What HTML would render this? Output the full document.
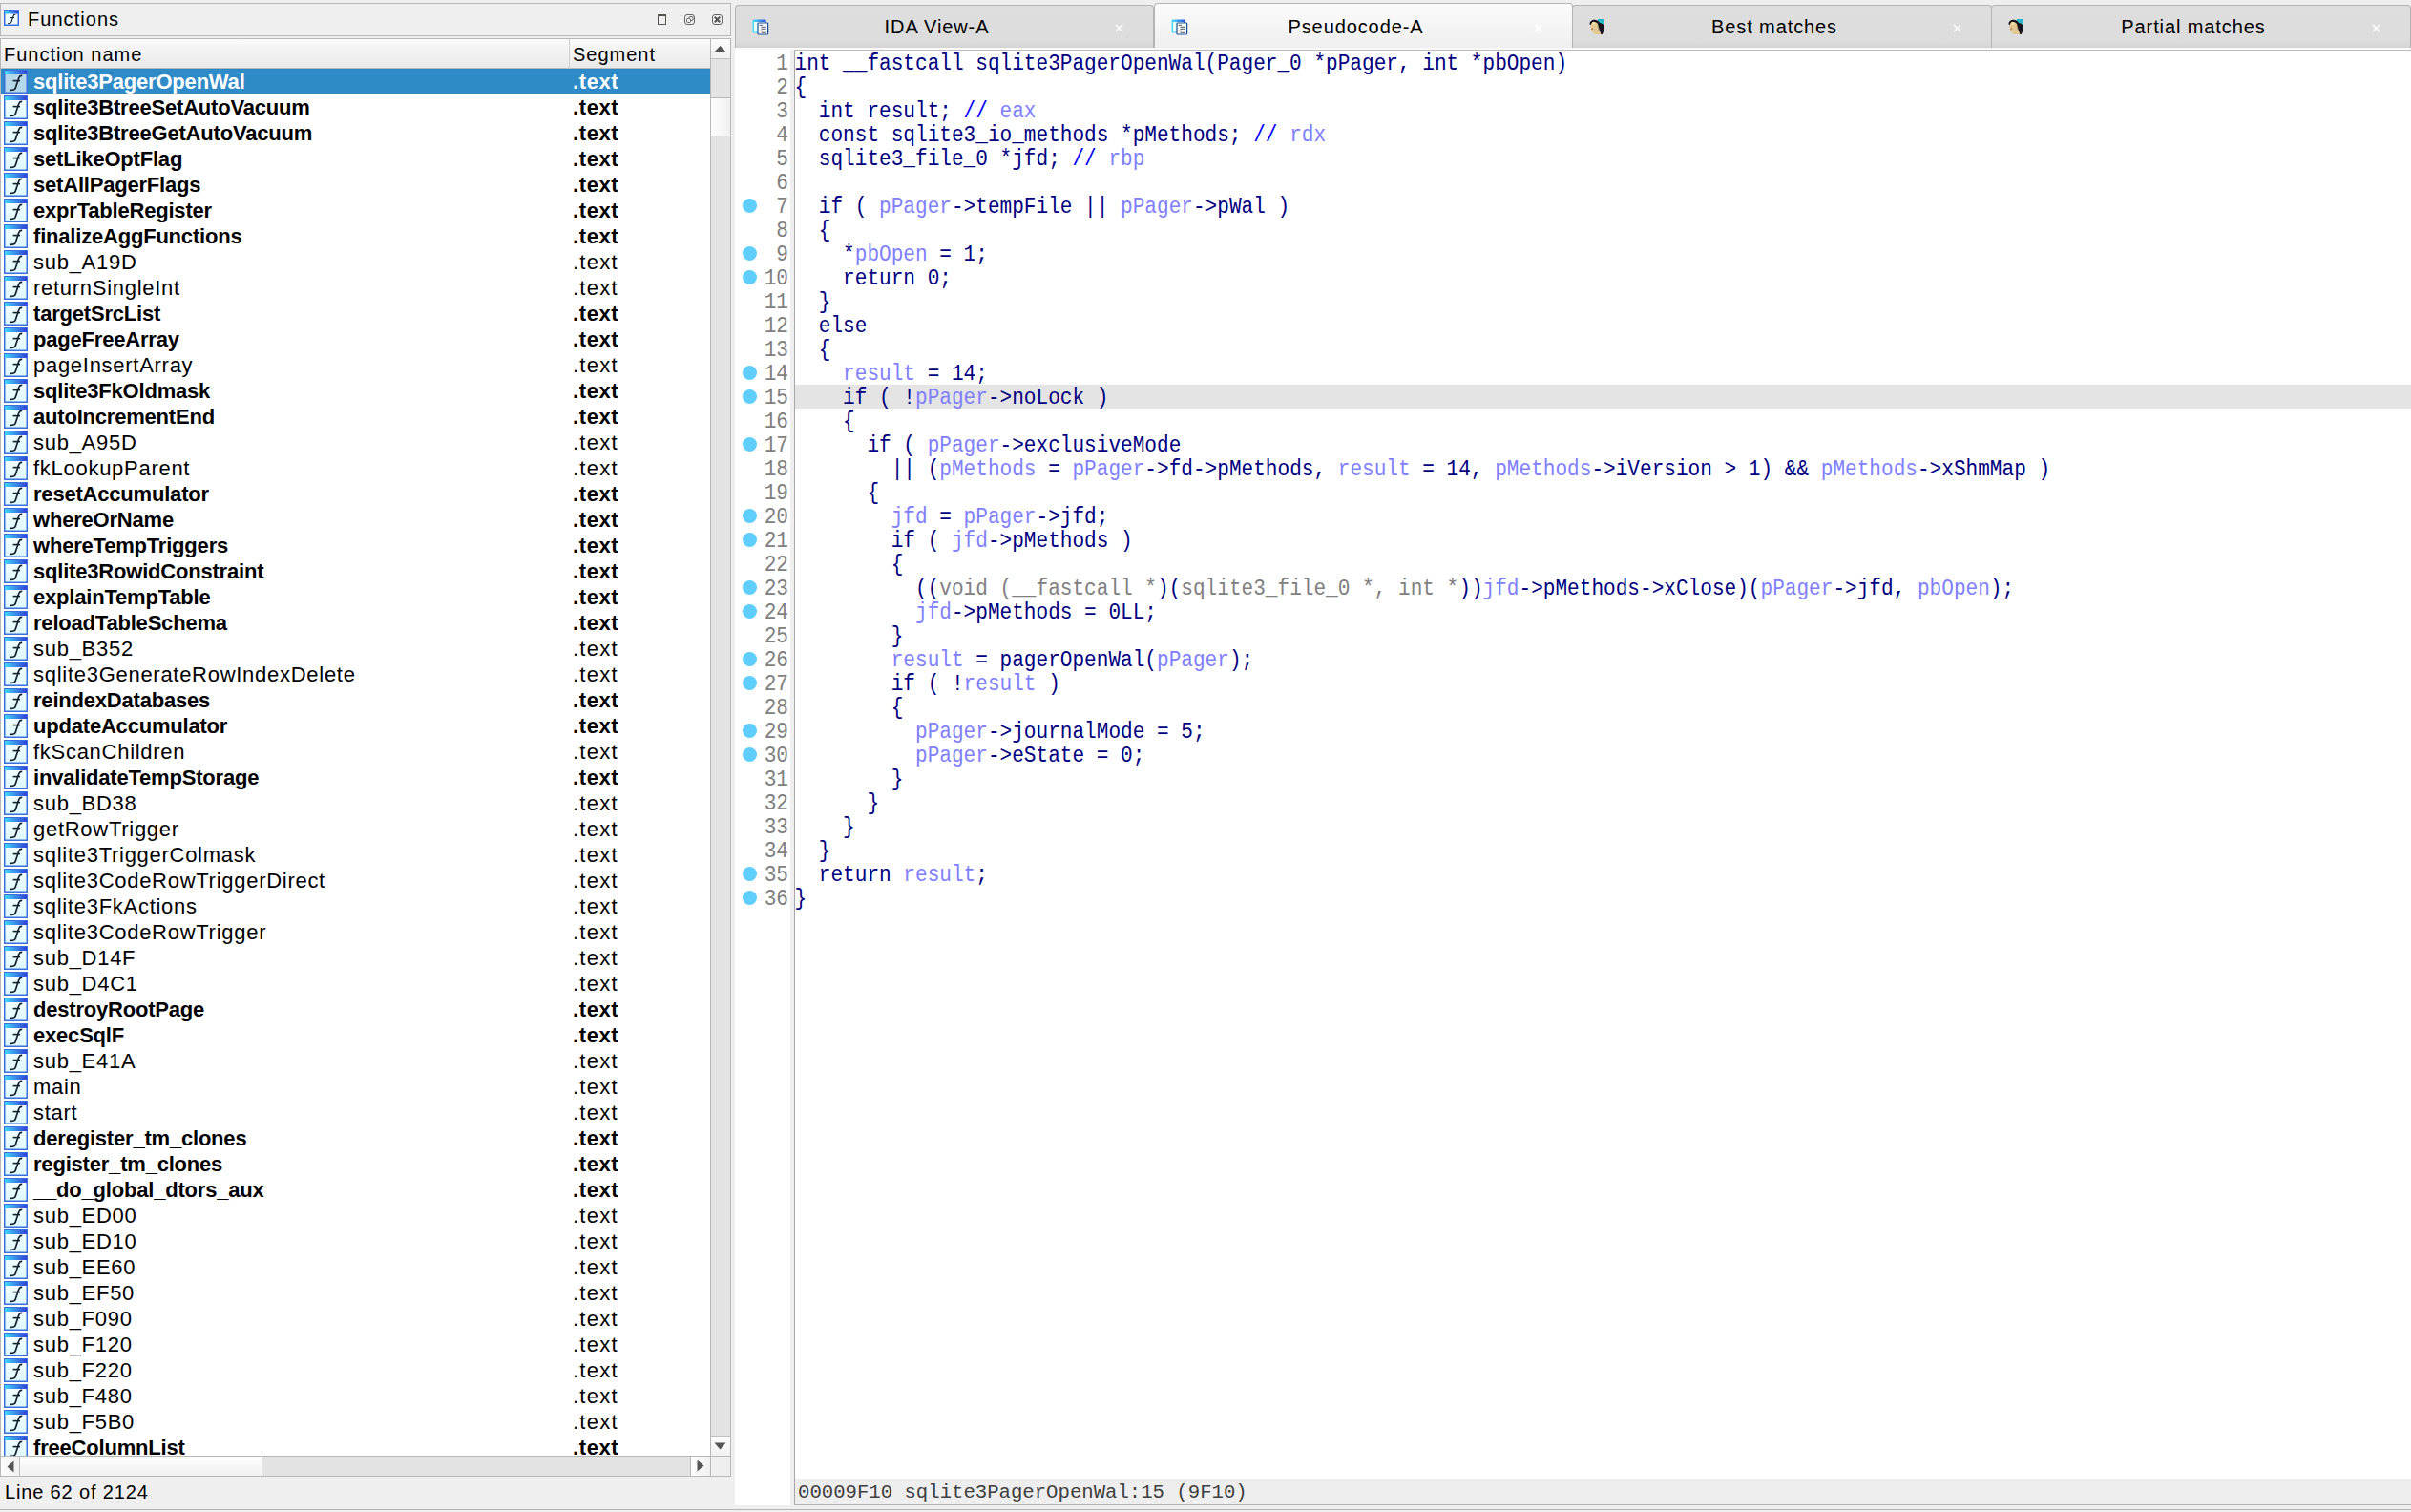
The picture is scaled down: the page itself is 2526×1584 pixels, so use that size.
<!DOCTYPE html><html><head><meta charset="utf-8"><style>
*{margin:0;padding:0;box-sizing:border-box}
html,body{width:2526px;height:1584px;overflow:hidden;background:#efefef;font-family:"Liberation Sans",sans-serif;color:#000}
.abs{position:absolute}
#ttl{left:0;top:3px;width:766px;height:35px;border:1px solid #b8b8b8;background:#efefef}
#ttl .t{position:absolute;left:28px;top:-1px;line-height:35px;font-size:20px;letter-spacing:1.05px}
#tbl{left:0;top:40px;width:766px;height:1507px;border:1px solid #b8b8b8;border-bottom:none;background:#fff;overflow:hidden}
#hdr{position:absolute;left:0;top:0;width:743px;height:31px;background:linear-gradient(#fafafa,#f3f3f3 40%,#e9e9e9);border-bottom:1px solid #b8b8b8}
#hdr .h{position:absolute;top:1px;line-height:31px;font-size:20px;letter-spacing:1.0px}
#hdr .sep{position:absolute;left:595px;top:0;width:1px;height:31px;background:#d0d0d0}
.row{position:absolute;left:0;width:743px;height:27px;font-size:22px;line-height:27px;white-space:nowrap}
.row .n{position:absolute;left:34px;top:0px;letter-spacing:0.72px}
.row .s{position:absolute;left:599px;top:0px;letter-spacing:1.25px}
.row.b .n{font-weight:bold;letter-spacing:-0.2px}.row.b .s{font-weight:bold;letter-spacing:0.6px}
.row.sel{background:#2f8bc8;color:#fff;border-top:1px solid #2488c8}.row.sel .fi{top:0}.row.sel .n,.row.sel .s{top:-1px}
.fi{position:absolute;left:3px;top:1px}
#vsb{left:744px;top:41px;width:21px;height:1484px;background:#e3e3e3;border-left:1px solid #b8b8b8}
#hsb{left:0;top:1525px;width:766px;height:22px;background:#e3e3e3;border-top:1px solid #b8b8b8;border-bottom:1px solid #b8b8b8;border-left:1px solid #b8b8b8;border-right:1px solid #b8b8b8}
#stat{left:5px;top:1546px;line-height:35px;font-size:20px;letter-spacing:0.85px}
.tab{position:absolute;top:5px;height:45px;background:linear-gradient(#dedede,#dcdcdc 85%,#d4d4d4);border:1px solid #b4b4b4;border-bottom:none;border-radius:4px 4px 0 0;font-size:20px;text-align:center;line-height:44px;letter-spacing:0.9px;padding-right:16px}
.tab.act{top:3px;height:47px;background:linear-gradient(#fbfbfb,#efefef);line-height:48px}
.tab .x{position:absolute;width:9px;height:9px}
#code{left:770px;top:52px;width:1756px;height:1525px;background:#fff}
#gut{left:828px;top:52px;width:4px;height:1525px;background:#efefef}
#gline{left:832px;top:52px;width:1px;height:1525px;background:#a8a8a8}
.ln{position:absolute;left:771px;width:55px;transform:scaleY(1.1);transform-origin:0 18px;margin-top:2px;height:25px;text-align:right;font-family:"Liberation Mono",monospace;font-size:21.08px;line-height:25px;color:#808080}
.cl{position:absolute;left:833px;width:1693px;height:25px;font-family:"Liberation Mono",monospace;font-size:21.08px;line-height:25px;white-space:pre}.cl .t{position:absolute;left:-0.5px;top:2px;transform:scaleY(1.1);transform-origin:0 18px}
.cl.hl{background:#e4e4e4}
.dot{position:absolute;left:778px;width:15px;height:15px;border-radius:50%;background:#5fcefd}
#cstat{left:833px;top:1549px;width:1693px;height:27px;background:#eeeeee;font-family:"Liberation Mono",monospace;font-size:20.65px;line-height:27px;color:#404040;padding-left:3px;padding-top:1px;white-space:pre}
</style></head><body>

<div id="ttl" class="abs">
<svg class="abs" style="left:3px;top:7px" width="16" height="16" viewBox="0 0 16 16"><defs><linearGradient id="tb2" x1="0" y1="0" x2="1" y2="0"><stop offset="0" stop-color="#40d8f8"/><stop offset="1" stop-color="#3040d8"/></linearGradient></defs><rect x="0.75" y="0.75" width="14.5" height="14.5" fill="#eefcff" stroke="#3b6fdc" stroke-width="1.5"/><rect x="1" y="1" width="14" height="2.5" fill="url(#tb2)"/><path d="M12.3 4.4 C11.2 4 10.5 4.5 10.1 5.7 L7.8 12.4 C7.4 13.5 6.5 13.9 4 13.8" fill="none" stroke="#15202e" stroke-width="1.1"/><path d="M6.2 7.5 L11 7.5" stroke="#15202e" stroke-width="1.1"/></svg>
<span class="t">Functions</span>
<svg class="abs" style="left:683px;top:7px" width="80" height="20" viewBox="0 0 80 20"><rect x="5.5" y="4.5" width="8" height="10" fill="none" stroke="#58564f" stroke-width="1"/><rect x="5.5" y="4.5" width="8" height="1.5" fill="#58564f"/><rect x="33.5" y="4.5" width="10" height="10" rx="2.5" fill="none" stroke="#666" stroke-width="1"/><rect x="38" y="6.5" width="4" height="4" rx="1" fill="none" stroke="#666" stroke-width="1"/><rect x="35.5" y="8.5" width="4" height="4" rx="1" fill="#efefef" stroke="#666" stroke-width="1"/><rect x="62.5" y="4.5" width="10" height="10" rx="2.5" fill="none" stroke="#666" stroke-width="1"/><path d="M64.8 6.8 L70.2 12.2 M70.2 6.8 L64.8 12.2" stroke="#555" stroke-width="2"/></svg>
</div>
<div id="tbl" class="abs">
<div id="hdr"><span class="h" style="left:3px">Function name</span><div class="sep"></div><span class="h" style="left:599px">Segment</span></div>
<div class="row b sel" style="top:31px"><svg class="fi" width="25" height="25" viewBox="0 0 25 25"><defs><linearGradient id="tb" x1="0" y1="0" x2="1" y2="0"><stop offset="0" stop-color="#40d8f8"/><stop offset="1" stop-color="#3040d8"/></linearGradient><linearGradient id="bd" x1="0" y1="0" x2="0" y2="1"><stop offset="0" stop-color="#f6ffff"/><stop offset="1" stop-color="#dcf8fc"/></linearGradient></defs><rect x="0.75" y="0.75" width="23.5" height="23.5" fill="#b4d8ea" stroke="#3b6fdc" stroke-width="1.5"/><rect x="1" y="1" width="23" height="4" fill="url(#tb)"/><path d="M19.2 6.6 C17.4 6 16.4 6.9 15.7 8.8 L12.2 19.2 C11.6 20.9 10.2 21.5 6.3 21.3" fill="none" stroke="#15202e" stroke-width="1.7"/><path d="M9.6 11.6 L17 11.6" stroke="#15202e" stroke-width="1.6"/></svg><span class="n">sqlite3PagerOpenWal</span><span class="s">.text</span></div>
<div class="row b" style="top:58px"><svg class="fi" width="25" height="25" viewBox="0 0 25 25"><defs><linearGradient id="tb" x1="0" y1="0" x2="1" y2="0"><stop offset="0" stop-color="#40d8f8"/><stop offset="1" stop-color="#3040d8"/></linearGradient><linearGradient id="bd" x1="0" y1="0" x2="0" y2="1"><stop offset="0" stop-color="#f6ffff"/><stop offset="1" stop-color="#dcf8fc"/></linearGradient></defs><rect x="0.75" y="0.75" width="23.5" height="23.5" fill="url(#bd)" stroke="#3b6fdc" stroke-width="1.5"/><rect x="1" y="1" width="23" height="4" fill="url(#tb)"/><path d="M19.2 6.6 C17.4 6 16.4 6.9 15.7 8.8 L12.2 19.2 C11.6 20.9 10.2 21.5 6.3 21.3" fill="none" stroke="#15202e" stroke-width="1.7"/><path d="M9.6 11.6 L17 11.6" stroke="#15202e" stroke-width="1.6"/></svg><span class="n">sqlite3BtreeSetAutoVacuum</span><span class="s">.text</span></div>
<div class="row b" style="top:85px"><svg class="fi" width="25" height="25" viewBox="0 0 25 25"><defs><linearGradient id="tb" x1="0" y1="0" x2="1" y2="0"><stop offset="0" stop-color="#40d8f8"/><stop offset="1" stop-color="#3040d8"/></linearGradient><linearGradient id="bd" x1="0" y1="0" x2="0" y2="1"><stop offset="0" stop-color="#f6ffff"/><stop offset="1" stop-color="#dcf8fc"/></linearGradient></defs><rect x="0.75" y="0.75" width="23.5" height="23.5" fill="url(#bd)" stroke="#3b6fdc" stroke-width="1.5"/><rect x="1" y="1" width="23" height="4" fill="url(#tb)"/><path d="M19.2 6.6 C17.4 6 16.4 6.9 15.7 8.8 L12.2 19.2 C11.6 20.9 10.2 21.5 6.3 21.3" fill="none" stroke="#15202e" stroke-width="1.7"/><path d="M9.6 11.6 L17 11.6" stroke="#15202e" stroke-width="1.6"/></svg><span class="n">sqlite3BtreeGetAutoVacuum</span><span class="s">.text</span></div>
<div class="row b" style="top:112px"><svg class="fi" width="25" height="25" viewBox="0 0 25 25"><defs><linearGradient id="tb" x1="0" y1="0" x2="1" y2="0"><stop offset="0" stop-color="#40d8f8"/><stop offset="1" stop-color="#3040d8"/></linearGradient><linearGradient id="bd" x1="0" y1="0" x2="0" y2="1"><stop offset="0" stop-color="#f6ffff"/><stop offset="1" stop-color="#dcf8fc"/></linearGradient></defs><rect x="0.75" y="0.75" width="23.5" height="23.5" fill="url(#bd)" stroke="#3b6fdc" stroke-width="1.5"/><rect x="1" y="1" width="23" height="4" fill="url(#tb)"/><path d="M19.2 6.6 C17.4 6 16.4 6.9 15.7 8.8 L12.2 19.2 C11.6 20.9 10.2 21.5 6.3 21.3" fill="none" stroke="#15202e" stroke-width="1.7"/><path d="M9.6 11.6 L17 11.6" stroke="#15202e" stroke-width="1.6"/></svg><span class="n">setLikeOptFlag</span><span class="s">.text</span></div>
<div class="row b" style="top:139px"><svg class="fi" width="25" height="25" viewBox="0 0 25 25"><defs><linearGradient id="tb" x1="0" y1="0" x2="1" y2="0"><stop offset="0" stop-color="#40d8f8"/><stop offset="1" stop-color="#3040d8"/></linearGradient><linearGradient id="bd" x1="0" y1="0" x2="0" y2="1"><stop offset="0" stop-color="#f6ffff"/><stop offset="1" stop-color="#dcf8fc"/></linearGradient></defs><rect x="0.75" y="0.75" width="23.5" height="23.5" fill="url(#bd)" stroke="#3b6fdc" stroke-width="1.5"/><rect x="1" y="1" width="23" height="4" fill="url(#tb)"/><path d="M19.2 6.6 C17.4 6 16.4 6.9 15.7 8.8 L12.2 19.2 C11.6 20.9 10.2 21.5 6.3 21.3" fill="none" stroke="#15202e" stroke-width="1.7"/><path d="M9.6 11.6 L17 11.6" stroke="#15202e" stroke-width="1.6"/></svg><span class="n">setAllPagerFlags</span><span class="s">.text</span></div>
<div class="row b" style="top:166px"><svg class="fi" width="25" height="25" viewBox="0 0 25 25"><defs><linearGradient id="tb" x1="0" y1="0" x2="1" y2="0"><stop offset="0" stop-color="#40d8f8"/><stop offset="1" stop-color="#3040d8"/></linearGradient><linearGradient id="bd" x1="0" y1="0" x2="0" y2="1"><stop offset="0" stop-color="#f6ffff"/><stop offset="1" stop-color="#dcf8fc"/></linearGradient></defs><rect x="0.75" y="0.75" width="23.5" height="23.5" fill="url(#bd)" stroke="#3b6fdc" stroke-width="1.5"/><rect x="1" y="1" width="23" height="4" fill="url(#tb)"/><path d="M19.2 6.6 C17.4 6 16.4 6.9 15.7 8.8 L12.2 19.2 C11.6 20.9 10.2 21.5 6.3 21.3" fill="none" stroke="#15202e" stroke-width="1.7"/><path d="M9.6 11.6 L17 11.6" stroke="#15202e" stroke-width="1.6"/></svg><span class="n">exprTableRegister</span><span class="s">.text</span></div>
<div class="row b" style="top:193px"><svg class="fi" width="25" height="25" viewBox="0 0 25 25"><defs><linearGradient id="tb" x1="0" y1="0" x2="1" y2="0"><stop offset="0" stop-color="#40d8f8"/><stop offset="1" stop-color="#3040d8"/></linearGradient><linearGradient id="bd" x1="0" y1="0" x2="0" y2="1"><stop offset="0" stop-color="#f6ffff"/><stop offset="1" stop-color="#dcf8fc"/></linearGradient></defs><rect x="0.75" y="0.75" width="23.5" height="23.5" fill="url(#bd)" stroke="#3b6fdc" stroke-width="1.5"/><rect x="1" y="1" width="23" height="4" fill="url(#tb)"/><path d="M19.2 6.6 C17.4 6 16.4 6.9 15.7 8.8 L12.2 19.2 C11.6 20.9 10.2 21.5 6.3 21.3" fill="none" stroke="#15202e" stroke-width="1.7"/><path d="M9.6 11.6 L17 11.6" stroke="#15202e" stroke-width="1.6"/></svg><span class="n">finalizeAggFunctions</span><span class="s">.text</span></div>
<div class="row" style="top:220px"><svg class="fi" width="25" height="25" viewBox="0 0 25 25"><defs><linearGradient id="tb" x1="0" y1="0" x2="1" y2="0"><stop offset="0" stop-color="#40d8f8"/><stop offset="1" stop-color="#3040d8"/></linearGradient><linearGradient id="bd" x1="0" y1="0" x2="0" y2="1"><stop offset="0" stop-color="#f6ffff"/><stop offset="1" stop-color="#dcf8fc"/></linearGradient></defs><rect x="0.75" y="0.75" width="23.5" height="23.5" fill="url(#bd)" stroke="#3b6fdc" stroke-width="1.5"/><rect x="1" y="1" width="23" height="4" fill="url(#tb)"/><path d="M19.2 6.6 C17.4 6 16.4 6.9 15.7 8.8 L12.2 19.2 C11.6 20.9 10.2 21.5 6.3 21.3" fill="none" stroke="#15202e" stroke-width="1.7"/><path d="M9.6 11.6 L17 11.6" stroke="#15202e" stroke-width="1.6"/></svg><span class="n">sub_A19D</span><span class="s">.text</span></div>
<div class="row" style="top:247px"><svg class="fi" width="25" height="25" viewBox="0 0 25 25"><defs><linearGradient id="tb" x1="0" y1="0" x2="1" y2="0"><stop offset="0" stop-color="#40d8f8"/><stop offset="1" stop-color="#3040d8"/></linearGradient><linearGradient id="bd" x1="0" y1="0" x2="0" y2="1"><stop offset="0" stop-color="#f6ffff"/><stop offset="1" stop-color="#dcf8fc"/></linearGradient></defs><rect x="0.75" y="0.75" width="23.5" height="23.5" fill="url(#bd)" stroke="#3b6fdc" stroke-width="1.5"/><rect x="1" y="1" width="23" height="4" fill="url(#tb)"/><path d="M19.2 6.6 C17.4 6 16.4 6.9 15.7 8.8 L12.2 19.2 C11.6 20.9 10.2 21.5 6.3 21.3" fill="none" stroke="#15202e" stroke-width="1.7"/><path d="M9.6 11.6 L17 11.6" stroke="#15202e" stroke-width="1.6"/></svg><span class="n">returnSingleInt</span><span class="s">.text</span></div>
<div class="row b" style="top:274px"><svg class="fi" width="25" height="25" viewBox="0 0 25 25"><defs><linearGradient id="tb" x1="0" y1="0" x2="1" y2="0"><stop offset="0" stop-color="#40d8f8"/><stop offset="1" stop-color="#3040d8"/></linearGradient><linearGradient id="bd" x1="0" y1="0" x2="0" y2="1"><stop offset="0" stop-color="#f6ffff"/><stop offset="1" stop-color="#dcf8fc"/></linearGradient></defs><rect x="0.75" y="0.75" width="23.5" height="23.5" fill="url(#bd)" stroke="#3b6fdc" stroke-width="1.5"/><rect x="1" y="1" width="23" height="4" fill="url(#tb)"/><path d="M19.2 6.6 C17.4 6 16.4 6.9 15.7 8.8 L12.2 19.2 C11.6 20.9 10.2 21.5 6.3 21.3" fill="none" stroke="#15202e" stroke-width="1.7"/><path d="M9.6 11.6 L17 11.6" stroke="#15202e" stroke-width="1.6"/></svg><span class="n">targetSrcList</span><span class="s">.text</span></div>
<div class="row b" style="top:301px"><svg class="fi" width="25" height="25" viewBox="0 0 25 25"><defs><linearGradient id="tb" x1="0" y1="0" x2="1" y2="0"><stop offset="0" stop-color="#40d8f8"/><stop offset="1" stop-color="#3040d8"/></linearGradient><linearGradient id="bd" x1="0" y1="0" x2="0" y2="1"><stop offset="0" stop-color="#f6ffff"/><stop offset="1" stop-color="#dcf8fc"/></linearGradient></defs><rect x="0.75" y="0.75" width="23.5" height="23.5" fill="url(#bd)" stroke="#3b6fdc" stroke-width="1.5"/><rect x="1" y="1" width="23" height="4" fill="url(#tb)"/><path d="M19.2 6.6 C17.4 6 16.4 6.9 15.7 8.8 L12.2 19.2 C11.6 20.9 10.2 21.5 6.3 21.3" fill="none" stroke="#15202e" stroke-width="1.7"/><path d="M9.6 11.6 L17 11.6" stroke="#15202e" stroke-width="1.6"/></svg><span class="n">pageFreeArray</span><span class="s">.text</span></div>
<div class="row" style="top:328px"><svg class="fi" width="25" height="25" viewBox="0 0 25 25"><defs><linearGradient id="tb" x1="0" y1="0" x2="1" y2="0"><stop offset="0" stop-color="#40d8f8"/><stop offset="1" stop-color="#3040d8"/></linearGradient><linearGradient id="bd" x1="0" y1="0" x2="0" y2="1"><stop offset="0" stop-color="#f6ffff"/><stop offset="1" stop-color="#dcf8fc"/></linearGradient></defs><rect x="0.75" y="0.75" width="23.5" height="23.5" fill="url(#bd)" stroke="#3b6fdc" stroke-width="1.5"/><rect x="1" y="1" width="23" height="4" fill="url(#tb)"/><path d="M19.2 6.6 C17.4 6 16.4 6.9 15.7 8.8 L12.2 19.2 C11.6 20.9 10.2 21.5 6.3 21.3" fill="none" stroke="#15202e" stroke-width="1.7"/><path d="M9.6 11.6 L17 11.6" stroke="#15202e" stroke-width="1.6"/></svg><span class="n">pageInsertArray</span><span class="s">.text</span></div>
<div class="row b" style="top:355px"><svg class="fi" width="25" height="25" viewBox="0 0 25 25"><defs><linearGradient id="tb" x1="0" y1="0" x2="1" y2="0"><stop offset="0" stop-color="#40d8f8"/><stop offset="1" stop-color="#3040d8"/></linearGradient><linearGradient id="bd" x1="0" y1="0" x2="0" y2="1"><stop offset="0" stop-color="#f6ffff"/><stop offset="1" stop-color="#dcf8fc"/></linearGradient></defs><rect x="0.75" y="0.75" width="23.5" height="23.5" fill="url(#bd)" stroke="#3b6fdc" stroke-width="1.5"/><rect x="1" y="1" width="23" height="4" fill="url(#tb)"/><path d="M19.2 6.6 C17.4 6 16.4 6.9 15.7 8.8 L12.2 19.2 C11.6 20.9 10.2 21.5 6.3 21.3" fill="none" stroke="#15202e" stroke-width="1.7"/><path d="M9.6 11.6 L17 11.6" stroke="#15202e" stroke-width="1.6"/></svg><span class="n">sqlite3FkOldmask</span><span class="s">.text</span></div>
<div class="row b" style="top:382px"><svg class="fi" width="25" height="25" viewBox="0 0 25 25"><defs><linearGradient id="tb" x1="0" y1="0" x2="1" y2="0"><stop offset="0" stop-color="#40d8f8"/><stop offset="1" stop-color="#3040d8"/></linearGradient><linearGradient id="bd" x1="0" y1="0" x2="0" y2="1"><stop offset="0" stop-color="#f6ffff"/><stop offset="1" stop-color="#dcf8fc"/></linearGradient></defs><rect x="0.75" y="0.75" width="23.5" height="23.5" fill="url(#bd)" stroke="#3b6fdc" stroke-width="1.5"/><rect x="1" y="1" width="23" height="4" fill="url(#tb)"/><path d="M19.2 6.6 C17.4 6 16.4 6.9 15.7 8.8 L12.2 19.2 C11.6 20.9 10.2 21.5 6.3 21.3" fill="none" stroke="#15202e" stroke-width="1.7"/><path d="M9.6 11.6 L17 11.6" stroke="#15202e" stroke-width="1.6"/></svg><span class="n">autoIncrementEnd</span><span class="s">.text</span></div>
<div class="row" style="top:409px"><svg class="fi" width="25" height="25" viewBox="0 0 25 25"><defs><linearGradient id="tb" x1="0" y1="0" x2="1" y2="0"><stop offset="0" stop-color="#40d8f8"/><stop offset="1" stop-color="#3040d8"/></linearGradient><linearGradient id="bd" x1="0" y1="0" x2="0" y2="1"><stop offset="0" stop-color="#f6ffff"/><stop offset="1" stop-color="#dcf8fc"/></linearGradient></defs><rect x="0.75" y="0.75" width="23.5" height="23.5" fill="url(#bd)" stroke="#3b6fdc" stroke-width="1.5"/><rect x="1" y="1" width="23" height="4" fill="url(#tb)"/><path d="M19.2 6.6 C17.4 6 16.4 6.9 15.7 8.8 L12.2 19.2 C11.6 20.9 10.2 21.5 6.3 21.3" fill="none" stroke="#15202e" stroke-width="1.7"/><path d="M9.6 11.6 L17 11.6" stroke="#15202e" stroke-width="1.6"/></svg><span class="n">sub_A95D</span><span class="s">.text</span></div>
<div class="row" style="top:436px"><svg class="fi" width="25" height="25" viewBox="0 0 25 25"><defs><linearGradient id="tb" x1="0" y1="0" x2="1" y2="0"><stop offset="0" stop-color="#40d8f8"/><stop offset="1" stop-color="#3040d8"/></linearGradient><linearGradient id="bd" x1="0" y1="0" x2="0" y2="1"><stop offset="0" stop-color="#f6ffff"/><stop offset="1" stop-color="#dcf8fc"/></linearGradient></defs><rect x="0.75" y="0.75" width="23.5" height="23.5" fill="url(#bd)" stroke="#3b6fdc" stroke-width="1.5"/><rect x="1" y="1" width="23" height="4" fill="url(#tb)"/><path d="M19.2 6.6 C17.4 6 16.4 6.9 15.7 8.8 L12.2 19.2 C11.6 20.9 10.2 21.5 6.3 21.3" fill="none" stroke="#15202e" stroke-width="1.7"/><path d="M9.6 11.6 L17 11.6" stroke="#15202e" stroke-width="1.6"/></svg><span class="n">fkLookupParent</span><span class="s">.text</span></div>
<div class="row b" style="top:463px"><svg class="fi" width="25" height="25" viewBox="0 0 25 25"><defs><linearGradient id="tb" x1="0" y1="0" x2="1" y2="0"><stop offset="0" stop-color="#40d8f8"/><stop offset="1" stop-color="#3040d8"/></linearGradient><linearGradient id="bd" x1="0" y1="0" x2="0" y2="1"><stop offset="0" stop-color="#f6ffff"/><stop offset="1" stop-color="#dcf8fc"/></linearGradient></defs><rect x="0.75" y="0.75" width="23.5" height="23.5" fill="url(#bd)" stroke="#3b6fdc" stroke-width="1.5"/><rect x="1" y="1" width="23" height="4" fill="url(#tb)"/><path d="M19.2 6.6 C17.4 6 16.4 6.9 15.7 8.8 L12.2 19.2 C11.6 20.9 10.2 21.5 6.3 21.3" fill="none" stroke="#15202e" stroke-width="1.7"/><path d="M9.6 11.6 L17 11.6" stroke="#15202e" stroke-width="1.6"/></svg><span class="n">resetAccumulator</span><span class="s">.text</span></div>
<div class="row b" style="top:490px"><svg class="fi" width="25" height="25" viewBox="0 0 25 25"><defs><linearGradient id="tb" x1="0" y1="0" x2="1" y2="0"><stop offset="0" stop-color="#40d8f8"/><stop offset="1" stop-color="#3040d8"/></linearGradient><linearGradient id="bd" x1="0" y1="0" x2="0" y2="1"><stop offset="0" stop-color="#f6ffff"/><stop offset="1" stop-color="#dcf8fc"/></linearGradient></defs><rect x="0.75" y="0.75" width="23.5" height="23.5" fill="url(#bd)" stroke="#3b6fdc" stroke-width="1.5"/><rect x="1" y="1" width="23" height="4" fill="url(#tb)"/><path d="M19.2 6.6 C17.4 6 16.4 6.9 15.7 8.8 L12.2 19.2 C11.6 20.9 10.2 21.5 6.3 21.3" fill="none" stroke="#15202e" stroke-width="1.7"/><path d="M9.6 11.6 L17 11.6" stroke="#15202e" stroke-width="1.6"/></svg><span class="n">whereOrName</span><span class="s">.text</span></div>
<div class="row b" style="top:517px"><svg class="fi" width="25" height="25" viewBox="0 0 25 25"><defs><linearGradient id="tb" x1="0" y1="0" x2="1" y2="0"><stop offset="0" stop-color="#40d8f8"/><stop offset="1" stop-color="#3040d8"/></linearGradient><linearGradient id="bd" x1="0" y1="0" x2="0" y2="1"><stop offset="0" stop-color="#f6ffff"/><stop offset="1" stop-color="#dcf8fc"/></linearGradient></defs><rect x="0.75" y="0.75" width="23.5" height="23.5" fill="url(#bd)" stroke="#3b6fdc" stroke-width="1.5"/><rect x="1" y="1" width="23" height="4" fill="url(#tb)"/><path d="M19.2 6.6 C17.4 6 16.4 6.9 15.7 8.8 L12.2 19.2 C11.6 20.9 10.2 21.5 6.3 21.3" fill="none" stroke="#15202e" stroke-width="1.7"/><path d="M9.6 11.6 L17 11.6" stroke="#15202e" stroke-width="1.6"/></svg><span class="n">whereTempTriggers</span><span class="s">.text</span></div>
<div class="row b" style="top:544px"><svg class="fi" width="25" height="25" viewBox="0 0 25 25"><defs><linearGradient id="tb" x1="0" y1="0" x2="1" y2="0"><stop offset="0" stop-color="#40d8f8"/><stop offset="1" stop-color="#3040d8"/></linearGradient><linearGradient id="bd" x1="0" y1="0" x2="0" y2="1"><stop offset="0" stop-color="#f6ffff"/><stop offset="1" stop-color="#dcf8fc"/></linearGradient></defs><rect x="0.75" y="0.75" width="23.5" height="23.5" fill="url(#bd)" stroke="#3b6fdc" stroke-width="1.5"/><rect x="1" y="1" width="23" height="4" fill="url(#tb)"/><path d="M19.2 6.6 C17.4 6 16.4 6.9 15.7 8.8 L12.2 19.2 C11.6 20.9 10.2 21.5 6.3 21.3" fill="none" stroke="#15202e" stroke-width="1.7"/><path d="M9.6 11.6 L17 11.6" stroke="#15202e" stroke-width="1.6"/></svg><span class="n">sqlite3RowidConstraint</span><span class="s">.text</span></div>
<div class="row b" style="top:571px"><svg class="fi" width="25" height="25" viewBox="0 0 25 25"><defs><linearGradient id="tb" x1="0" y1="0" x2="1" y2="0"><stop offset="0" stop-color="#40d8f8"/><stop offset="1" stop-color="#3040d8"/></linearGradient><linearGradient id="bd" x1="0" y1="0" x2="0" y2="1"><stop offset="0" stop-color="#f6ffff"/><stop offset="1" stop-color="#dcf8fc"/></linearGradient></defs><rect x="0.75" y="0.75" width="23.5" height="23.5" fill="url(#bd)" stroke="#3b6fdc" stroke-width="1.5"/><rect x="1" y="1" width="23" height="4" fill="url(#tb)"/><path d="M19.2 6.6 C17.4 6 16.4 6.9 15.7 8.8 L12.2 19.2 C11.6 20.9 10.2 21.5 6.3 21.3" fill="none" stroke="#15202e" stroke-width="1.7"/><path d="M9.6 11.6 L17 11.6" stroke="#15202e" stroke-width="1.6"/></svg><span class="n">explainTempTable</span><span class="s">.text</span></div>
<div class="row b" style="top:598px"><svg class="fi" width="25" height="25" viewBox="0 0 25 25"><defs><linearGradient id="tb" x1="0" y1="0" x2="1" y2="0"><stop offset="0" stop-color="#40d8f8"/><stop offset="1" stop-color="#3040d8"/></linearGradient><linearGradient id="bd" x1="0" y1="0" x2="0" y2="1"><stop offset="0" stop-color="#f6ffff"/><stop offset="1" stop-color="#dcf8fc"/></linearGradient></defs><rect x="0.75" y="0.75" width="23.5" height="23.5" fill="url(#bd)" stroke="#3b6fdc" stroke-width="1.5"/><rect x="1" y="1" width="23" height="4" fill="url(#tb)"/><path d="M19.2 6.6 C17.4 6 16.4 6.9 15.7 8.8 L12.2 19.2 C11.6 20.9 10.2 21.5 6.3 21.3" fill="none" stroke="#15202e" stroke-width="1.7"/><path d="M9.6 11.6 L17 11.6" stroke="#15202e" stroke-width="1.6"/></svg><span class="n">reloadTableSchema</span><span class="s">.text</span></div>
<div class="row" style="top:625px"><svg class="fi" width="25" height="25" viewBox="0 0 25 25"><defs><linearGradient id="tb" x1="0" y1="0" x2="1" y2="0"><stop offset="0" stop-color="#40d8f8"/><stop offset="1" stop-color="#3040d8"/></linearGradient><linearGradient id="bd" x1="0" y1="0" x2="0" y2="1"><stop offset="0" stop-color="#f6ffff"/><stop offset="1" stop-color="#dcf8fc"/></linearGradient></defs><rect x="0.75" y="0.75" width="23.5" height="23.5" fill="url(#bd)" stroke="#3b6fdc" stroke-width="1.5"/><rect x="1" y="1" width="23" height="4" fill="url(#tb)"/><path d="M19.2 6.6 C17.4 6 16.4 6.9 15.7 8.8 L12.2 19.2 C11.6 20.9 10.2 21.5 6.3 21.3" fill="none" stroke="#15202e" stroke-width="1.7"/><path d="M9.6 11.6 L17 11.6" stroke="#15202e" stroke-width="1.6"/></svg><span class="n">sub_B352</span><span class="s">.text</span></div>
<div class="row" style="top:652px"><svg class="fi" width="25" height="25" viewBox="0 0 25 25"><defs><linearGradient id="tb" x1="0" y1="0" x2="1" y2="0"><stop offset="0" stop-color="#40d8f8"/><stop offset="1" stop-color="#3040d8"/></linearGradient><linearGradient id="bd" x1="0" y1="0" x2="0" y2="1"><stop offset="0" stop-color="#f6ffff"/><stop offset="1" stop-color="#dcf8fc"/></linearGradient></defs><rect x="0.75" y="0.75" width="23.5" height="23.5" fill="url(#bd)" stroke="#3b6fdc" stroke-width="1.5"/><rect x="1" y="1" width="23" height="4" fill="url(#tb)"/><path d="M19.2 6.6 C17.4 6 16.4 6.9 15.7 8.8 L12.2 19.2 C11.6 20.9 10.2 21.5 6.3 21.3" fill="none" stroke="#15202e" stroke-width="1.7"/><path d="M9.6 11.6 L17 11.6" stroke="#15202e" stroke-width="1.6"/></svg><span class="n">sqlite3GenerateRowIndexDelete</span><span class="s">.text</span></div>
<div class="row b" style="top:679px"><svg class="fi" width="25" height="25" viewBox="0 0 25 25"><defs><linearGradient id="tb" x1="0" y1="0" x2="1" y2="0"><stop offset="0" stop-color="#40d8f8"/><stop offset="1" stop-color="#3040d8"/></linearGradient><linearGradient id="bd" x1="0" y1="0" x2="0" y2="1"><stop offset="0" stop-color="#f6ffff"/><stop offset="1" stop-color="#dcf8fc"/></linearGradient></defs><rect x="0.75" y="0.75" width="23.5" height="23.5" fill="url(#bd)" stroke="#3b6fdc" stroke-width="1.5"/><rect x="1" y="1" width="23" height="4" fill="url(#tb)"/><path d="M19.2 6.6 C17.4 6 16.4 6.9 15.7 8.8 L12.2 19.2 C11.6 20.9 10.2 21.5 6.3 21.3" fill="none" stroke="#15202e" stroke-width="1.7"/><path d="M9.6 11.6 L17 11.6" stroke="#15202e" stroke-width="1.6"/></svg><span class="n">reindexDatabases</span><span class="s">.text</span></div>
<div class="row b" style="top:706px"><svg class="fi" width="25" height="25" viewBox="0 0 25 25"><defs><linearGradient id="tb" x1="0" y1="0" x2="1" y2="0"><stop offset="0" stop-color="#40d8f8"/><stop offset="1" stop-color="#3040d8"/></linearGradient><linearGradient id="bd" x1="0" y1="0" x2="0" y2="1"><stop offset="0" stop-color="#f6ffff"/><stop offset="1" stop-color="#dcf8fc"/></linearGradient></defs><rect x="0.75" y="0.75" width="23.5" height="23.5" fill="url(#bd)" stroke="#3b6fdc" stroke-width="1.5"/><rect x="1" y="1" width="23" height="4" fill="url(#tb)"/><path d="M19.2 6.6 C17.4 6 16.4 6.9 15.7 8.8 L12.2 19.2 C11.6 20.9 10.2 21.5 6.3 21.3" fill="none" stroke="#15202e" stroke-width="1.7"/><path d="M9.6 11.6 L17 11.6" stroke="#15202e" stroke-width="1.6"/></svg><span class="n">updateAccumulator</span><span class="s">.text</span></div>
<div class="row" style="top:733px"><svg class="fi" width="25" height="25" viewBox="0 0 25 25"><defs><linearGradient id="tb" x1="0" y1="0" x2="1" y2="0"><stop offset="0" stop-color="#40d8f8"/><stop offset="1" stop-color="#3040d8"/></linearGradient><linearGradient id="bd" x1="0" y1="0" x2="0" y2="1"><stop offset="0" stop-color="#f6ffff"/><stop offset="1" stop-color="#dcf8fc"/></linearGradient></defs><rect x="0.75" y="0.75" width="23.5" height="23.5" fill="url(#bd)" stroke="#3b6fdc" stroke-width="1.5"/><rect x="1" y="1" width="23" height="4" fill="url(#tb)"/><path d="M19.2 6.6 C17.4 6 16.4 6.9 15.7 8.8 L12.2 19.2 C11.6 20.9 10.2 21.5 6.3 21.3" fill="none" stroke="#15202e" stroke-width="1.7"/><path d="M9.6 11.6 L17 11.6" stroke="#15202e" stroke-width="1.6"/></svg><span class="n">fkScanChildren</span><span class="s">.text</span></div>
<div class="row b" style="top:760px"><svg class="fi" width="25" height="25" viewBox="0 0 25 25"><defs><linearGradient id="tb" x1="0" y1="0" x2="1" y2="0"><stop offset="0" stop-color="#40d8f8"/><stop offset="1" stop-color="#3040d8"/></linearGradient><linearGradient id="bd" x1="0" y1="0" x2="0" y2="1"><stop offset="0" stop-color="#f6ffff"/><stop offset="1" stop-color="#dcf8fc"/></linearGradient></defs><rect x="0.75" y="0.75" width="23.5" height="23.5" fill="url(#bd)" stroke="#3b6fdc" stroke-width="1.5"/><rect x="1" y="1" width="23" height="4" fill="url(#tb)"/><path d="M19.2 6.6 C17.4 6 16.4 6.9 15.7 8.8 L12.2 19.2 C11.6 20.9 10.2 21.5 6.3 21.3" fill="none" stroke="#15202e" stroke-width="1.7"/><path d="M9.6 11.6 L17 11.6" stroke="#15202e" stroke-width="1.6"/></svg><span class="n">invalidateTempStorage</span><span class="s">.text</span></div>
<div class="row" style="top:787px"><svg class="fi" width="25" height="25" viewBox="0 0 25 25"><defs><linearGradient id="tb" x1="0" y1="0" x2="1" y2="0"><stop offset="0" stop-color="#40d8f8"/><stop offset="1" stop-color="#3040d8"/></linearGradient><linearGradient id="bd" x1="0" y1="0" x2="0" y2="1"><stop offset="0" stop-color="#f6ffff"/><stop offset="1" stop-color="#dcf8fc"/></linearGradient></defs><rect x="0.75" y="0.75" width="23.5" height="23.5" fill="url(#bd)" stroke="#3b6fdc" stroke-width="1.5"/><rect x="1" y="1" width="23" height="4" fill="url(#tb)"/><path d="M19.2 6.6 C17.4 6 16.4 6.9 15.7 8.8 L12.2 19.2 C11.6 20.9 10.2 21.5 6.3 21.3" fill="none" stroke="#15202e" stroke-width="1.7"/><path d="M9.6 11.6 L17 11.6" stroke="#15202e" stroke-width="1.6"/></svg><span class="n">sub_BD38</span><span class="s">.text</span></div>
<div class="row" style="top:814px"><svg class="fi" width="25" height="25" viewBox="0 0 25 25"><defs><linearGradient id="tb" x1="0" y1="0" x2="1" y2="0"><stop offset="0" stop-color="#40d8f8"/><stop offset="1" stop-color="#3040d8"/></linearGradient><linearGradient id="bd" x1="0" y1="0" x2="0" y2="1"><stop offset="0" stop-color="#f6ffff"/><stop offset="1" stop-color="#dcf8fc"/></linearGradient></defs><rect x="0.75" y="0.75" width="23.5" height="23.5" fill="url(#bd)" stroke="#3b6fdc" stroke-width="1.5"/><rect x="1" y="1" width="23" height="4" fill="url(#tb)"/><path d="M19.2 6.6 C17.4 6 16.4 6.9 15.7 8.8 L12.2 19.2 C11.6 20.9 10.2 21.5 6.3 21.3" fill="none" stroke="#15202e" stroke-width="1.7"/><path d="M9.6 11.6 L17 11.6" stroke="#15202e" stroke-width="1.6"/></svg><span class="n">getRowTrigger</span><span class="s">.text</span></div>
<div class="row" style="top:841px"><svg class="fi" width="25" height="25" viewBox="0 0 25 25"><defs><linearGradient id="tb" x1="0" y1="0" x2="1" y2="0"><stop offset="0" stop-color="#40d8f8"/><stop offset="1" stop-color="#3040d8"/></linearGradient><linearGradient id="bd" x1="0" y1="0" x2="0" y2="1"><stop offset="0" stop-color="#f6ffff"/><stop offset="1" stop-color="#dcf8fc"/></linearGradient></defs><rect x="0.75" y="0.75" width="23.5" height="23.5" fill="url(#bd)" stroke="#3b6fdc" stroke-width="1.5"/><rect x="1" y="1" width="23" height="4" fill="url(#tb)"/><path d="M19.2 6.6 C17.4 6 16.4 6.9 15.7 8.8 L12.2 19.2 C11.6 20.9 10.2 21.5 6.3 21.3" fill="none" stroke="#15202e" stroke-width="1.7"/><path d="M9.6 11.6 L17 11.6" stroke="#15202e" stroke-width="1.6"/></svg><span class="n">sqlite3TriggerColmask</span><span class="s">.text</span></div>
<div class="row" style="top:868px"><svg class="fi" width="25" height="25" viewBox="0 0 25 25"><defs><linearGradient id="tb" x1="0" y1="0" x2="1" y2="0"><stop offset="0" stop-color="#40d8f8"/><stop offset="1" stop-color="#3040d8"/></linearGradient><linearGradient id="bd" x1="0" y1="0" x2="0" y2="1"><stop offset="0" stop-color="#f6ffff"/><stop offset="1" stop-color="#dcf8fc"/></linearGradient></defs><rect x="0.75" y="0.75" width="23.5" height="23.5" fill="url(#bd)" stroke="#3b6fdc" stroke-width="1.5"/><rect x="1" y="1" width="23" height="4" fill="url(#tb)"/><path d="M19.2 6.6 C17.4 6 16.4 6.9 15.7 8.8 L12.2 19.2 C11.6 20.9 10.2 21.5 6.3 21.3" fill="none" stroke="#15202e" stroke-width="1.7"/><path d="M9.6 11.6 L17 11.6" stroke="#15202e" stroke-width="1.6"/></svg><span class="n">sqlite3CodeRowTriggerDirect</span><span class="s">.text</span></div>
<div class="row" style="top:895px"><svg class="fi" width="25" height="25" viewBox="0 0 25 25"><defs><linearGradient id="tb" x1="0" y1="0" x2="1" y2="0"><stop offset="0" stop-color="#40d8f8"/><stop offset="1" stop-color="#3040d8"/></linearGradient><linearGradient id="bd" x1="0" y1="0" x2="0" y2="1"><stop offset="0" stop-color="#f6ffff"/><stop offset="1" stop-color="#dcf8fc"/></linearGradient></defs><rect x="0.75" y="0.75" width="23.5" height="23.5" fill="url(#bd)" stroke="#3b6fdc" stroke-width="1.5"/><rect x="1" y="1" width="23" height="4" fill="url(#tb)"/><path d="M19.2 6.6 C17.4 6 16.4 6.9 15.7 8.8 L12.2 19.2 C11.6 20.9 10.2 21.5 6.3 21.3" fill="none" stroke="#15202e" stroke-width="1.7"/><path d="M9.6 11.6 L17 11.6" stroke="#15202e" stroke-width="1.6"/></svg><span class="n">sqlite3FkActions</span><span class="s">.text</span></div>
<div class="row" style="top:922px"><svg class="fi" width="25" height="25" viewBox="0 0 25 25"><defs><linearGradient id="tb" x1="0" y1="0" x2="1" y2="0"><stop offset="0" stop-color="#40d8f8"/><stop offset="1" stop-color="#3040d8"/></linearGradient><linearGradient id="bd" x1="0" y1="0" x2="0" y2="1"><stop offset="0" stop-color="#f6ffff"/><stop offset="1" stop-color="#dcf8fc"/></linearGradient></defs><rect x="0.75" y="0.75" width="23.5" height="23.5" fill="url(#bd)" stroke="#3b6fdc" stroke-width="1.5"/><rect x="1" y="1" width="23" height="4" fill="url(#tb)"/><path d="M19.2 6.6 C17.4 6 16.4 6.9 15.7 8.8 L12.2 19.2 C11.6 20.9 10.2 21.5 6.3 21.3" fill="none" stroke="#15202e" stroke-width="1.7"/><path d="M9.6 11.6 L17 11.6" stroke="#15202e" stroke-width="1.6"/></svg><span class="n">sqlite3CodeRowTrigger</span><span class="s">.text</span></div>
<div class="row" style="top:949px"><svg class="fi" width="25" height="25" viewBox="0 0 25 25"><defs><linearGradient id="tb" x1="0" y1="0" x2="1" y2="0"><stop offset="0" stop-color="#40d8f8"/><stop offset="1" stop-color="#3040d8"/></linearGradient><linearGradient id="bd" x1="0" y1="0" x2="0" y2="1"><stop offset="0" stop-color="#f6ffff"/><stop offset="1" stop-color="#dcf8fc"/></linearGradient></defs><rect x="0.75" y="0.75" width="23.5" height="23.5" fill="url(#bd)" stroke="#3b6fdc" stroke-width="1.5"/><rect x="1" y="1" width="23" height="4" fill="url(#tb)"/><path d="M19.2 6.6 C17.4 6 16.4 6.9 15.7 8.8 L12.2 19.2 C11.6 20.9 10.2 21.5 6.3 21.3" fill="none" stroke="#15202e" stroke-width="1.7"/><path d="M9.6 11.6 L17 11.6" stroke="#15202e" stroke-width="1.6"/></svg><span class="n">sub_D14F</span><span class="s">.text</span></div>
<div class="row" style="top:976px"><svg class="fi" width="25" height="25" viewBox="0 0 25 25"><defs><linearGradient id="tb" x1="0" y1="0" x2="1" y2="0"><stop offset="0" stop-color="#40d8f8"/><stop offset="1" stop-color="#3040d8"/></linearGradient><linearGradient id="bd" x1="0" y1="0" x2="0" y2="1"><stop offset="0" stop-color="#f6ffff"/><stop offset="1" stop-color="#dcf8fc"/></linearGradient></defs><rect x="0.75" y="0.75" width="23.5" height="23.5" fill="url(#bd)" stroke="#3b6fdc" stroke-width="1.5"/><rect x="1" y="1" width="23" height="4" fill="url(#tb)"/><path d="M19.2 6.6 C17.4 6 16.4 6.9 15.7 8.8 L12.2 19.2 C11.6 20.9 10.2 21.5 6.3 21.3" fill="none" stroke="#15202e" stroke-width="1.7"/><path d="M9.6 11.6 L17 11.6" stroke="#15202e" stroke-width="1.6"/></svg><span class="n">sub_D4C1</span><span class="s">.text</span></div>
<div class="row b" style="top:1003px"><svg class="fi" width="25" height="25" viewBox="0 0 25 25"><defs><linearGradient id="tb" x1="0" y1="0" x2="1" y2="0"><stop offset="0" stop-color="#40d8f8"/><stop offset="1" stop-color="#3040d8"/></linearGradient><linearGradient id="bd" x1="0" y1="0" x2="0" y2="1"><stop offset="0" stop-color="#f6ffff"/><stop offset="1" stop-color="#dcf8fc"/></linearGradient></defs><rect x="0.75" y="0.75" width="23.5" height="23.5" fill="url(#bd)" stroke="#3b6fdc" stroke-width="1.5"/><rect x="1" y="1" width="23" height="4" fill="url(#tb)"/><path d="M19.2 6.6 C17.4 6 16.4 6.9 15.7 8.8 L12.2 19.2 C11.6 20.9 10.2 21.5 6.3 21.3" fill="none" stroke="#15202e" stroke-width="1.7"/><path d="M9.6 11.6 L17 11.6" stroke="#15202e" stroke-width="1.6"/></svg><span class="n">destroyRootPage</span><span class="s">.text</span></div>
<div class="row b" style="top:1030px"><svg class="fi" width="25" height="25" viewBox="0 0 25 25"><defs><linearGradient id="tb" x1="0" y1="0" x2="1" y2="0"><stop offset="0" stop-color="#40d8f8"/><stop offset="1" stop-color="#3040d8"/></linearGradient><linearGradient id="bd" x1="0" y1="0" x2="0" y2="1"><stop offset="0" stop-color="#f6ffff"/><stop offset="1" stop-color="#dcf8fc"/></linearGradient></defs><rect x="0.75" y="0.75" width="23.5" height="23.5" fill="url(#bd)" stroke="#3b6fdc" stroke-width="1.5"/><rect x="1" y="1" width="23" height="4" fill="url(#tb)"/><path d="M19.2 6.6 C17.4 6 16.4 6.9 15.7 8.8 L12.2 19.2 C11.6 20.9 10.2 21.5 6.3 21.3" fill="none" stroke="#15202e" stroke-width="1.7"/><path d="M9.6 11.6 L17 11.6" stroke="#15202e" stroke-width="1.6"/></svg><span class="n">execSqlF</span><span class="s">.text</span></div>
<div class="row" style="top:1057px"><svg class="fi" width="25" height="25" viewBox="0 0 25 25"><defs><linearGradient id="tb" x1="0" y1="0" x2="1" y2="0"><stop offset="0" stop-color="#40d8f8"/><stop offset="1" stop-color="#3040d8"/></linearGradient><linearGradient id="bd" x1="0" y1="0" x2="0" y2="1"><stop offset="0" stop-color="#f6ffff"/><stop offset="1" stop-color="#dcf8fc"/></linearGradient></defs><rect x="0.75" y="0.75" width="23.5" height="23.5" fill="url(#bd)" stroke="#3b6fdc" stroke-width="1.5"/><rect x="1" y="1" width="23" height="4" fill="url(#tb)"/><path d="M19.2 6.6 C17.4 6 16.4 6.9 15.7 8.8 L12.2 19.2 C11.6 20.9 10.2 21.5 6.3 21.3" fill="none" stroke="#15202e" stroke-width="1.7"/><path d="M9.6 11.6 L17 11.6" stroke="#15202e" stroke-width="1.6"/></svg><span class="n">sub_E41A</span><span class="s">.text</span></div>
<div class="row" style="top:1084px"><svg class="fi" width="25" height="25" viewBox="0 0 25 25"><defs><linearGradient id="tb" x1="0" y1="0" x2="1" y2="0"><stop offset="0" stop-color="#40d8f8"/><stop offset="1" stop-color="#3040d8"/></linearGradient><linearGradient id="bd" x1="0" y1="0" x2="0" y2="1"><stop offset="0" stop-color="#f6ffff"/><stop offset="1" stop-color="#dcf8fc"/></linearGradient></defs><rect x="0.75" y="0.75" width="23.5" height="23.5" fill="url(#bd)" stroke="#3b6fdc" stroke-width="1.5"/><rect x="1" y="1" width="23" height="4" fill="url(#tb)"/><path d="M19.2 6.6 C17.4 6 16.4 6.9 15.7 8.8 L12.2 19.2 C11.6 20.9 10.2 21.5 6.3 21.3" fill="none" stroke="#15202e" stroke-width="1.7"/><path d="M9.6 11.6 L17 11.6" stroke="#15202e" stroke-width="1.6"/></svg><span class="n">main</span><span class="s">.text</span></div>
<div class="row" style="top:1111px"><svg class="fi" width="25" height="25" viewBox="0 0 25 25"><defs><linearGradient id="tb" x1="0" y1="0" x2="1" y2="0"><stop offset="0" stop-color="#40d8f8"/><stop offset="1" stop-color="#3040d8"/></linearGradient><linearGradient id="bd" x1="0" y1="0" x2="0" y2="1"><stop offset="0" stop-color="#f6ffff"/><stop offset="1" stop-color="#dcf8fc"/></linearGradient></defs><rect x="0.75" y="0.75" width="23.5" height="23.5" fill="url(#bd)" stroke="#3b6fdc" stroke-width="1.5"/><rect x="1" y="1" width="23" height="4" fill="url(#tb)"/><path d="M19.2 6.6 C17.4 6 16.4 6.9 15.7 8.8 L12.2 19.2 C11.6 20.9 10.2 21.5 6.3 21.3" fill="none" stroke="#15202e" stroke-width="1.7"/><path d="M9.6 11.6 L17 11.6" stroke="#15202e" stroke-width="1.6"/></svg><span class="n">start</span><span class="s">.text</span></div>
<div class="row b" style="top:1138px"><svg class="fi" width="25" height="25" viewBox="0 0 25 25"><defs><linearGradient id="tb" x1="0" y1="0" x2="1" y2="0"><stop offset="0" stop-color="#40d8f8"/><stop offset="1" stop-color="#3040d8"/></linearGradient><linearGradient id="bd" x1="0" y1="0" x2="0" y2="1"><stop offset="0" stop-color="#f6ffff"/><stop offset="1" stop-color="#dcf8fc"/></linearGradient></defs><rect x="0.75" y="0.75" width="23.5" height="23.5" fill="url(#bd)" stroke="#3b6fdc" stroke-width="1.5"/><rect x="1" y="1" width="23" height="4" fill="url(#tb)"/><path d="M19.2 6.6 C17.4 6 16.4 6.9 15.7 8.8 L12.2 19.2 C11.6 20.9 10.2 21.5 6.3 21.3" fill="none" stroke="#15202e" stroke-width="1.7"/><path d="M9.6 11.6 L17 11.6" stroke="#15202e" stroke-width="1.6"/></svg><span class="n">deregister_tm_clones</span><span class="s">.text</span></div>
<div class="row b" style="top:1165px"><svg class="fi" width="25" height="25" viewBox="0 0 25 25"><defs><linearGradient id="tb" x1="0" y1="0" x2="1" y2="0"><stop offset="0" stop-color="#40d8f8"/><stop offset="1" stop-color="#3040d8"/></linearGradient><linearGradient id="bd" x1="0" y1="0" x2="0" y2="1"><stop offset="0" stop-color="#f6ffff"/><stop offset="1" stop-color="#dcf8fc"/></linearGradient></defs><rect x="0.75" y="0.75" width="23.5" height="23.5" fill="url(#bd)" stroke="#3b6fdc" stroke-width="1.5"/><rect x="1" y="1" width="23" height="4" fill="url(#tb)"/><path d="M19.2 6.6 C17.4 6 16.4 6.9 15.7 8.8 L12.2 19.2 C11.6 20.9 10.2 21.5 6.3 21.3" fill="none" stroke="#15202e" stroke-width="1.7"/><path d="M9.6 11.6 L17 11.6" stroke="#15202e" stroke-width="1.6"/></svg><span class="n">register_tm_clones</span><span class="s">.text</span></div>
<div class="row b" style="top:1192px"><svg class="fi" width="25" height="25" viewBox="0 0 25 25"><defs><linearGradient id="tb" x1="0" y1="0" x2="1" y2="0"><stop offset="0" stop-color="#40d8f8"/><stop offset="1" stop-color="#3040d8"/></linearGradient><linearGradient id="bd" x1="0" y1="0" x2="0" y2="1"><stop offset="0" stop-color="#f6ffff"/><stop offset="1" stop-color="#dcf8fc"/></linearGradient></defs><rect x="0.75" y="0.75" width="23.5" height="23.5" fill="url(#bd)" stroke="#3b6fdc" stroke-width="1.5"/><rect x="1" y="1" width="23" height="4" fill="url(#tb)"/><path d="M19.2 6.6 C17.4 6 16.4 6.9 15.7 8.8 L12.2 19.2 C11.6 20.9 10.2 21.5 6.3 21.3" fill="none" stroke="#15202e" stroke-width="1.7"/><path d="M9.6 11.6 L17 11.6" stroke="#15202e" stroke-width="1.6"/></svg><span class="n">__do_global_dtors_aux</span><span class="s">.text</span></div>
<div class="row" style="top:1219px"><svg class="fi" width="25" height="25" viewBox="0 0 25 25"><defs><linearGradient id="tb" x1="0" y1="0" x2="1" y2="0"><stop offset="0" stop-color="#40d8f8"/><stop offset="1" stop-color="#3040d8"/></linearGradient><linearGradient id="bd" x1="0" y1="0" x2="0" y2="1"><stop offset="0" stop-color="#f6ffff"/><stop offset="1" stop-color="#dcf8fc"/></linearGradient></defs><rect x="0.75" y="0.75" width="23.5" height="23.5" fill="url(#bd)" stroke="#3b6fdc" stroke-width="1.5"/><rect x="1" y="1" width="23" height="4" fill="url(#tb)"/><path d="M19.2 6.6 C17.4 6 16.4 6.9 15.7 8.8 L12.2 19.2 C11.6 20.9 10.2 21.5 6.3 21.3" fill="none" stroke="#15202e" stroke-width="1.7"/><path d="M9.6 11.6 L17 11.6" stroke="#15202e" stroke-width="1.6"/></svg><span class="n">sub_ED00</span><span class="s">.text</span></div>
<div class="row" style="top:1246px"><svg class="fi" width="25" height="25" viewBox="0 0 25 25"><defs><linearGradient id="tb" x1="0" y1="0" x2="1" y2="0"><stop offset="0" stop-color="#40d8f8"/><stop offset="1" stop-color="#3040d8"/></linearGradient><linearGradient id="bd" x1="0" y1="0" x2="0" y2="1"><stop offset="0" stop-color="#f6ffff"/><stop offset="1" stop-color="#dcf8fc"/></linearGradient></defs><rect x="0.75" y="0.75" width="23.5" height="23.5" fill="url(#bd)" stroke="#3b6fdc" stroke-width="1.5"/><rect x="1" y="1" width="23" height="4" fill="url(#tb)"/><path d="M19.2 6.6 C17.4 6 16.4 6.9 15.7 8.8 L12.2 19.2 C11.6 20.9 10.2 21.5 6.3 21.3" fill="none" stroke="#15202e" stroke-width="1.7"/><path d="M9.6 11.6 L17 11.6" stroke="#15202e" stroke-width="1.6"/></svg><span class="n">sub_ED10</span><span class="s">.text</span></div>
<div class="row" style="top:1273px"><svg class="fi" width="25" height="25" viewBox="0 0 25 25"><defs><linearGradient id="tb" x1="0" y1="0" x2="1" y2="0"><stop offset="0" stop-color="#40d8f8"/><stop offset="1" stop-color="#3040d8"/></linearGradient><linearGradient id="bd" x1="0" y1="0" x2="0" y2="1"><stop offset="0" stop-color="#f6ffff"/><stop offset="1" stop-color="#dcf8fc"/></linearGradient></defs><rect x="0.75" y="0.75" width="23.5" height="23.5" fill="url(#bd)" stroke="#3b6fdc" stroke-width="1.5"/><rect x="1" y="1" width="23" height="4" fill="url(#tb)"/><path d="M19.2 6.6 C17.4 6 16.4 6.9 15.7 8.8 L12.2 19.2 C11.6 20.9 10.2 21.5 6.3 21.3" fill="none" stroke="#15202e" stroke-width="1.7"/><path d="M9.6 11.6 L17 11.6" stroke="#15202e" stroke-width="1.6"/></svg><span class="n">sub_EE60</span><span class="s">.text</span></div>
<div class="row" style="top:1300px"><svg class="fi" width="25" height="25" viewBox="0 0 25 25"><defs><linearGradient id="tb" x1="0" y1="0" x2="1" y2="0"><stop offset="0" stop-color="#40d8f8"/><stop offset="1" stop-color="#3040d8"/></linearGradient><linearGradient id="bd" x1="0" y1="0" x2="0" y2="1"><stop offset="0" stop-color="#f6ffff"/><stop offset="1" stop-color="#dcf8fc"/></linearGradient></defs><rect x="0.75" y="0.75" width="23.5" height="23.5" fill="url(#bd)" stroke="#3b6fdc" stroke-width="1.5"/><rect x="1" y="1" width="23" height="4" fill="url(#tb)"/><path d="M19.2 6.6 C17.4 6 16.4 6.9 15.7 8.8 L12.2 19.2 C11.6 20.9 10.2 21.5 6.3 21.3" fill="none" stroke="#15202e" stroke-width="1.7"/><path d="M9.6 11.6 L17 11.6" stroke="#15202e" stroke-width="1.6"/></svg><span class="n">sub_EF50</span><span class="s">.text</span></div>
<div class="row" style="top:1327px"><svg class="fi" width="25" height="25" viewBox="0 0 25 25"><defs><linearGradient id="tb" x1="0" y1="0" x2="1" y2="0"><stop offset="0" stop-color="#40d8f8"/><stop offset="1" stop-color="#3040d8"/></linearGradient><linearGradient id="bd" x1="0" y1="0" x2="0" y2="1"><stop offset="0" stop-color="#f6ffff"/><stop offset="1" stop-color="#dcf8fc"/></linearGradient></defs><rect x="0.75" y="0.75" width="23.5" height="23.5" fill="url(#bd)" stroke="#3b6fdc" stroke-width="1.5"/><rect x="1" y="1" width="23" height="4" fill="url(#tb)"/><path d="M19.2 6.6 C17.4 6 16.4 6.9 15.7 8.8 L12.2 19.2 C11.6 20.9 10.2 21.5 6.3 21.3" fill="none" stroke="#15202e" stroke-width="1.7"/><path d="M9.6 11.6 L17 11.6" stroke="#15202e" stroke-width="1.6"/></svg><span class="n">sub_F090</span><span class="s">.text</span></div>
<div class="row" style="top:1354px"><svg class="fi" width="25" height="25" viewBox="0 0 25 25"><defs><linearGradient id="tb" x1="0" y1="0" x2="1" y2="0"><stop offset="0" stop-color="#40d8f8"/><stop offset="1" stop-color="#3040d8"/></linearGradient><linearGradient id="bd" x1="0" y1="0" x2="0" y2="1"><stop offset="0" stop-color="#f6ffff"/><stop offset="1" stop-color="#dcf8fc"/></linearGradient></defs><rect x="0.75" y="0.75" width="23.5" height="23.5" fill="url(#bd)" stroke="#3b6fdc" stroke-width="1.5"/><rect x="1" y="1" width="23" height="4" fill="url(#tb)"/><path d="M19.2 6.6 C17.4 6 16.4 6.9 15.7 8.8 L12.2 19.2 C11.6 20.9 10.2 21.5 6.3 21.3" fill="none" stroke="#15202e" stroke-width="1.7"/><path d="M9.6 11.6 L17 11.6" stroke="#15202e" stroke-width="1.6"/></svg><span class="n">sub_F120</span><span class="s">.text</span></div>
<div class="row" style="top:1381px"><svg class="fi" width="25" height="25" viewBox="0 0 25 25"><defs><linearGradient id="tb" x1="0" y1="0" x2="1" y2="0"><stop offset="0" stop-color="#40d8f8"/><stop offset="1" stop-color="#3040d8"/></linearGradient><linearGradient id="bd" x1="0" y1="0" x2="0" y2="1"><stop offset="0" stop-color="#f6ffff"/><stop offset="1" stop-color="#dcf8fc"/></linearGradient></defs><rect x="0.75" y="0.75" width="23.5" height="23.5" fill="url(#bd)" stroke="#3b6fdc" stroke-width="1.5"/><rect x="1" y="1" width="23" height="4" fill="url(#tb)"/><path d="M19.2 6.6 C17.4 6 16.4 6.9 15.7 8.8 L12.2 19.2 C11.6 20.9 10.2 21.5 6.3 21.3" fill="none" stroke="#15202e" stroke-width="1.7"/><path d="M9.6 11.6 L17 11.6" stroke="#15202e" stroke-width="1.6"/></svg><span class="n">sub_F220</span><span class="s">.text</span></div>
<div class="row" style="top:1408px"><svg class="fi" width="25" height="25" viewBox="0 0 25 25"><defs><linearGradient id="tb" x1="0" y1="0" x2="1" y2="0"><stop offset="0" stop-color="#40d8f8"/><stop offset="1" stop-color="#3040d8"/></linearGradient><linearGradient id="bd" x1="0" y1="0" x2="0" y2="1"><stop offset="0" stop-color="#f6ffff"/><stop offset="1" stop-color="#dcf8fc"/></linearGradient></defs><rect x="0.75" y="0.75" width="23.5" height="23.5" fill="url(#bd)" stroke="#3b6fdc" stroke-width="1.5"/><rect x="1" y="1" width="23" height="4" fill="url(#tb)"/><path d="M19.2 6.6 C17.4 6 16.4 6.9 15.7 8.8 L12.2 19.2 C11.6 20.9 10.2 21.5 6.3 21.3" fill="none" stroke="#15202e" stroke-width="1.7"/><path d="M9.6 11.6 L17 11.6" stroke="#15202e" stroke-width="1.6"/></svg><span class="n">sub_F480</span><span class="s">.text</span></div>
<div class="row" style="top:1435px"><svg class="fi" width="25" height="25" viewBox="0 0 25 25"><defs><linearGradient id="tb" x1="0" y1="0" x2="1" y2="0"><stop offset="0" stop-color="#40d8f8"/><stop offset="1" stop-color="#3040d8"/></linearGradient><linearGradient id="bd" x1="0" y1="0" x2="0" y2="1"><stop offset="0" stop-color="#f6ffff"/><stop offset="1" stop-color="#dcf8fc"/></linearGradient></defs><rect x="0.75" y="0.75" width="23.5" height="23.5" fill="url(#bd)" stroke="#3b6fdc" stroke-width="1.5"/><rect x="1" y="1" width="23" height="4" fill="url(#tb)"/><path d="M19.2 6.6 C17.4 6 16.4 6.9 15.7 8.8 L12.2 19.2 C11.6 20.9 10.2 21.5 6.3 21.3" fill="none" stroke="#15202e" stroke-width="1.7"/><path d="M9.6 11.6 L17 11.6" stroke="#15202e" stroke-width="1.6"/></svg><span class="n">sub_F5B0</span><span class="s">.text</span></div>
<div class="row b" style="top:1462px"><svg class="fi" width="25" height="25" viewBox="0 0 25 25"><defs><linearGradient id="tb" x1="0" y1="0" x2="1" y2="0"><stop offset="0" stop-color="#40d8f8"/><stop offset="1" stop-color="#3040d8"/></linearGradient><linearGradient id="bd" x1="0" y1="0" x2="0" y2="1"><stop offset="0" stop-color="#f6ffff"/><stop offset="1" stop-color="#dcf8fc"/></linearGradient></defs><rect x="0.75" y="0.75" width="23.5" height="23.5" fill="url(#bd)" stroke="#3b6fdc" stroke-width="1.5"/><rect x="1" y="1" width="23" height="4" fill="url(#tb)"/><path d="M19.2 6.6 C17.4 6 16.4 6.9 15.7 8.8 L12.2 19.2 C11.6 20.9 10.2 21.5 6.3 21.3" fill="none" stroke="#15202e" stroke-width="1.7"/><path d="M9.6 11.6 L17 11.6" stroke="#15202e" stroke-width="1.6"/></svg><span class="n">freeColumnList</span><span class="s">.text</span></div>
</div>
<div id="vsb" class="abs"><div class="abs" style="left:0;top:0;width:20px;height:21px;background:linear-gradient(#fdfdfd,#f0f0f0);border-bottom:1px solid #c0c0c0"></div><svg class="abs" style="left:3px;top:6px" width="13" height="8"><path d="M0.8 7 L6.5 1 L12.2 7 Z" fill="#555"/></svg><div class="abs" style="left:0;top:61px;width:20px;height:41px;background:linear-gradient(90deg,#fefefe,#f0f0f0);border-top:1px solid #b8b8b8;border-bottom:1px solid #b8b8b8"></div><div class="abs" style="left:0;top:1463px;width:20px;height:22px;background:linear-gradient(#fdfdfd,#f0f0f0);border-top:1px solid #c0c0c0"></div><svg class="abs" style="left:3px;top:1470px" width="13" height="8"><path d="M0.5 0.5 L6.5 7.5 L12.5 0.5 Z" fill="#555"/></svg></div>
<div id="hsb" class="abs"><div class="abs" style="left:0;top:0;width:20px;height:20px;background:linear-gradient(90deg,#fdfdfd,#f0f0f0);border-right:1px solid #c0c0c0"></div><svg class="abs" style="left:6px;top:4px" width="8" height="13"><path d="M7.5 0.5 L0.5 6.5 L7.5 12.5 Z" fill="#555"/></svg><div class="abs" style="left:20px;top:0;width:254px;height:20px;background:linear-gradient(#fefefe,#f0f0f0);border-right:1px solid #b8b8b8"></div><div class="abs" style="left:722px;top:0;width:22px;height:20px;background:linear-gradient(90deg,#fdfdfd,#f0f0f0);border-left:1px solid #b8b8b8;border-right:1px solid #b8b8b8"></div><svg class="abs" style="left:729px;top:3px" width="8" height="13"><path d="M0.5 0.5 L7.5 6.5 L0.5 12.5 Z" fill="#555"/></svg><div class="abs" style="left:744px;top:0;width:20px;height:20px;background:#efefef"></div></div>
<div id="stat" class="abs">Line 62 of 2124</div>
<div class="tab" style="left:770px;width:439px"><svg class="abs" style="left:17px;top:14px" width="18" height="18" viewBox="0 0 18 18"><defs><linearGradient id="wb" x1="0" y1="0" x2="1" y2="0"><stop offset="0" stop-color="#50e0ff"/><stop offset="1" stop-color="#2c50d8"/></linearGradient></defs><rect x="0.5" y="0.5" width="14" height="14" rx="1" fill="url(#wb)"/><rect x="2" y="3" width="11" height="10.5" fill="#e8fdff"/><rect x="6" y="4" width="10.6" height="12" rx="0.8" fill="#fff" stroke="#1a5090" stroke-width="1.2"/><path d="M7.6 6.3h3.4M9.4 8.3h5.4M9.4 10.3h5.4M7.6 12.3h3.4M9.4 14.2h5.4" stroke="#4a545e" stroke-width="1"/></svg><span>IDA View-A</span><svg class="x" style="left:397px;top:19px" width="9" height="9"><path d="M0.8 0.8 L8.2 8.2 M8.2 0.8 L0.8 8.2" stroke="#fff" stroke-width="1.4"/></svg></div>
<div class="tab act" style="left:1209px;width:439px"><svg class="abs" style="left:17px;top:16px" width="18" height="18" viewBox="0 0 18 18"><defs><linearGradient id="wb" x1="0" y1="0" x2="1" y2="0"><stop offset="0" stop-color="#50e0ff"/><stop offset="1" stop-color="#2c50d8"/></linearGradient></defs><rect x="0.5" y="0.5" width="14" height="14" rx="1" fill="url(#wb)"/><rect x="2" y="3" width="11" height="10.5" fill="#e8fdff"/><rect x="6" y="4" width="10.6" height="12" rx="0.8" fill="#fff" stroke="#1a5090" stroke-width="1.2"/><path d="M7.6 6.3h3.4M9.4 8.3h5.4M9.4 10.3h5.4M7.6 12.3h3.4M9.4 14.2h5.4" stroke="#4a545e" stroke-width="1"/></svg><span>Pseudocode-A</span><svg class="x" style="left:397px;top:21px" width="9" height="9"><path d="M0.8 0.8 L8.2 8.2 M8.2 0.8 L0.8 8.2" stroke="#fff" stroke-width="1.4"/></svg></div>
<div class="tab" style="left:1647px;width:440px"><svg class="abs" style="left:17px;top:14px" width="18" height="18" viewBox="0 0 18 18"><defs><linearGradient id="tl" x1="0" y1="0" x2="0" y2="1"><stop offset="0" stop-color="#20b0c8"/><stop offset="1" stop-color="#38d0d0"/></linearGradient></defs><rect x="9" y="0" width="7" height="8" fill="url(#tl)"/><path d="M0.5 5.5 C0.5 2 3 0.6 6 0.8 C8.5 1 10 2.5 11 4 C13 4.2 15.8 5.5 16 8.5 C16.2 11.5 14.5 13.5 13.8 16 L12 16 C11.5 13 10.5 11 10 9 C9.5 7 9 5 7 4 C5 3.5 3 4.5 2 6 Z" fill="#17131a"/><path d="M1.8 6 C2.6 3.2 6.5 2.4 8.4 4.2 C9.7 5.6 9.9 8.5 10.2 10.5 C10.5 12.5 11.4 14 12.4 16 L5 16 C4.5 14.6 3 13.2 2.3 11.6 C1.5 9.6 1.3 7.8 1.8 6Z" fill="#e2c894"/><ellipse cx="4.6" cy="4.3" rx="1.9" ry="1.5" fill="#f6e2a6"/><ellipse cx="3.2" cy="10.2" rx="1" ry="1.2" fill="#b0603a" opacity="0.55"/><path d="M9.2 6 C9.8 8 9.8 10 10.3 12" stroke="#5a4030" stroke-width="0.8" fill="none" opacity="0.6"/></svg><span>Best matches</span><svg class="x" style="left:398px;top:19px" width="9" height="9"><path d="M0.8 0.8 L8.2 8.2 M8.2 0.8 L0.8 8.2" stroke="#fff" stroke-width="1.4"/></svg></div>
<div class="tab" style="left:2086px;width:440px"><svg class="abs" style="left:17px;top:14px" width="18" height="18" viewBox="0 0 18 18"><defs><linearGradient id="tl" x1="0" y1="0" x2="0" y2="1"><stop offset="0" stop-color="#20b0c8"/><stop offset="1" stop-color="#38d0d0"/></linearGradient></defs><rect x="9" y="0" width="7" height="8" fill="url(#tl)"/><path d="M0.5 5.5 C0.5 2 3 0.6 6 0.8 C8.5 1 10 2.5 11 4 C13 4.2 15.8 5.5 16 8.5 C16.2 11.5 14.5 13.5 13.8 16 L12 16 C11.5 13 10.5 11 10 9 C9.5 7 9 5 7 4 C5 3.5 3 4.5 2 6 Z" fill="#17131a"/><path d="M1.8 6 C2.6 3.2 6.5 2.4 8.4 4.2 C9.7 5.6 9.9 8.5 10.2 10.5 C10.5 12.5 11.4 14 12.4 16 L5 16 C4.5 14.6 3 13.2 2.3 11.6 C1.5 9.6 1.3 7.8 1.8 6Z" fill="#e2c894"/><ellipse cx="4.6" cy="4.3" rx="1.9" ry="1.5" fill="#f6e2a6"/><ellipse cx="3.2" cy="10.2" rx="1" ry="1.2" fill="#b0603a" opacity="0.55"/><path d="M9.2 6 C9.8 8 9.8 10 10.3 12" stroke="#5a4030" stroke-width="0.8" fill="none" opacity="0.6"/></svg><span>Partial matches</span><svg class="x" style="left:398px;top:19px" width="9" height="9"><path d="M0.8 0.8 L8.2 8.2 M8.2 0.8 L0.8 8.2" stroke="#fff" stroke-width="1.4"/></svg></div>
<div class="abs" style="left:770px;top:50px;width:1756px;height:2px;background:#fafafa"></div>
<div id="code" class="abs"></div><div id="gut" class="abs"></div><div id="gline" class="abs"></div>
<div class="abs" style="left:832px;top:52px;width:1694px;height:1px;background:#bcbcbc"></div>
<div class="ln" style="top:53px">1</div>
<div class="cl" style="top:53px"><span class="t"><span style="color:#000080">int __fastcall sqlite3PagerOpenWal(Pager_0 *pPager, int *pbOpen)</span></span></div>
<div class="ln" style="top:78px">2</div>
<div class="cl" style="top:78px"><span class="t"><span style="color:#000080">{</span></span></div>
<div class="ln" style="top:103px">3</div>
<div class="cl" style="top:103px"><span class="t"><span style="color:#000080">  int result; </span><span style="color:#0000ff">//</span><span style="color:#8080ff"> eax</span></span></div>
<div class="ln" style="top:128px">4</div>
<div class="cl" style="top:128px"><span class="t"><span style="color:#000080">  const sqlite3_io_methods *pMethods; </span><span style="color:#0000ff">//</span><span style="color:#8080ff"> rdx</span></span></div>
<div class="ln" style="top:153px">5</div>
<div class="cl" style="top:153px"><span class="t"><span style="color:#000080">  sqlite3_file_0 *jfd; </span><span style="color:#0000ff">//</span><span style="color:#8080ff"> rbp</span></span></div>
<div class="ln" style="top:178px">6</div>
<div class="cl" style="top:178px"><span class="t"></span></div>
<div class="ln" style="top:203px">7</div>
<div class="dot" style="top:208px"></div>
<div class="cl" style="top:203px"><span class="t"><span style="color:#000080">  if ( </span><span style="color:#8080ff">pPager</span><span style="color:#000080">-&gt;tempFile || </span><span style="color:#8080ff">pPager</span><span style="color:#000080">-&gt;pWal )</span></span></div>
<div class="ln" style="top:228px">8</div>
<div class="cl" style="top:228px"><span class="t"><span style="color:#000080">  {</span></span></div>
<div class="ln" style="top:253px">9</div>
<div class="dot" style="top:258px"></div>
<div class="cl" style="top:253px"><span class="t"><span style="color:#000080">    *</span><span style="color:#8080ff">pbOpen</span><span style="color:#000080"> = 1;</span></span></div>
<div class="ln" style="top:278px">10</div>
<div class="dot" style="top:283px"></div>
<div class="cl" style="top:278px"><span class="t"><span style="color:#000080">    return 0;</span></span></div>
<div class="ln" style="top:303px">11</div>
<div class="cl" style="top:303px"><span class="t"><span style="color:#000080">  }</span></span></div>
<div class="ln" style="top:328px">12</div>
<div class="cl" style="top:328px"><span class="t"><span style="color:#000080">  else</span></span></div>
<div class="ln" style="top:353px">13</div>
<div class="cl" style="top:353px"><span class="t"><span style="color:#000080">  {</span></span></div>
<div class="ln" style="top:378px">14</div>
<div class="dot" style="top:383px"></div>
<div class="cl" style="top:378px"><span class="t"><span style="color:#000080">    </span><span style="color:#8080ff">result</span><span style="color:#000080"> = 14;</span></span></div>
<div class="ln" style="top:403px">15</div>
<div class="dot" style="top:408px"></div>
<div class="cl hl" style="top:403px"><span class="t"><span style="color:#000080">    if ( !</span><span style="color:#8080ff">pPager</span><span style="color:#000080">-&gt;noLock )</span></span></div>
<div class="ln" style="top:428px">16</div>
<div class="cl" style="top:428px"><span class="t"><span style="color:#000080">    {</span></span></div>
<div class="ln" style="top:453px">17</div>
<div class="dot" style="top:458px"></div>
<div class="cl" style="top:453px"><span class="t"><span style="color:#000080">      if ( </span><span style="color:#8080ff">pPager</span><span style="color:#000080">-&gt;exclusiveMode</span></span></div>
<div class="ln" style="top:478px">18</div>
<div class="cl" style="top:478px"><span class="t"><span style="color:#000080">        || (</span><span style="color:#8080ff">pMethods</span><span style="color:#000080"> = </span><span style="color:#8080ff">pPager</span><span style="color:#000080">-&gt;fd-&gt;pMethods, </span><span style="color:#8080ff">result</span><span style="color:#000080"> = 14, </span><span style="color:#8080ff">pMethods</span><span style="color:#000080">-&gt;iVersion &gt; 1) &amp;&amp; </span><span style="color:#8080ff">pMethods</span><span style="color:#000080">-&gt;xShmMap )</span></span></div>
<div class="ln" style="top:503px">19</div>
<div class="cl" style="top:503px"><span class="t"><span style="color:#000080">      {</span></span></div>
<div class="ln" style="top:528px">20</div>
<div class="dot" style="top:533px"></div>
<div class="cl" style="top:528px"><span class="t"><span style="color:#000080">        </span><span style="color:#8080ff">jfd</span><span style="color:#000080"> = </span><span style="color:#8080ff">pPager</span><span style="color:#000080">-&gt;jfd;</span></span></div>
<div class="ln" style="top:553px">21</div>
<div class="dot" style="top:558px"></div>
<div class="cl" style="top:553px"><span class="t"><span style="color:#000080">        if ( </span><span style="color:#8080ff">jfd</span><span style="color:#000080">-&gt;pMethods )</span></span></div>
<div class="ln" style="top:578px">22</div>
<div class="cl" style="top:578px"><span class="t"><span style="color:#000080">        {</span></span></div>
<div class="ln" style="top:603px">23</div>
<div class="dot" style="top:608px"></div>
<div class="cl" style="top:603px"><span class="t"><span style="color:#000080">          ((</span><span style="color:#808080">void (__fastcall *</span><span style="color:#000080">)(</span><span style="color:#808080">sqlite3_file_0 *, int *</span><span style="color:#000080">))</span><span style="color:#8080ff">jfd</span><span style="color:#000080">-&gt;pMethods-&gt;xClose)(</span><span style="color:#8080ff">pPager</span><span style="color:#000080">-&gt;jfd, </span><span style="color:#8080ff">pbOpen</span><span style="color:#000080">);</span></span></div>
<div class="ln" style="top:628px">24</div>
<div class="dot" style="top:633px"></div>
<div class="cl" style="top:628px"><span class="t"><span style="color:#000080">          </span><span style="color:#8080ff">jfd</span><span style="color:#000080">-&gt;pMethods = 0LL;</span></span></div>
<div class="ln" style="top:653px">25</div>
<div class="cl" style="top:653px"><span class="t"><span style="color:#000080">        }</span></span></div>
<div class="ln" style="top:678px">26</div>
<div class="dot" style="top:683px"></div>
<div class="cl" style="top:678px"><span class="t"><span style="color:#000080">        </span><span style="color:#8080ff">result</span><span style="color:#000080"> = pagerOpenWal(</span><span style="color:#8080ff">pPager</span><span style="color:#000080">);</span></span></div>
<div class="ln" style="top:703px">27</div>
<div class="dot" style="top:708px"></div>
<div class="cl" style="top:703px"><span class="t"><span style="color:#000080">        if ( !</span><span style="color:#8080ff">result</span><span style="color:#000080"> )</span></span></div>
<div class="ln" style="top:728px">28</div>
<div class="cl" style="top:728px"><span class="t"><span style="color:#000080">        {</span></span></div>
<div class="ln" style="top:753px">29</div>
<div class="dot" style="top:758px"></div>
<div class="cl" style="top:753px"><span class="t"><span style="color:#000080">          </span><span style="color:#8080ff">pPager</span><span style="color:#000080">-&gt;journalMode = 5;</span></span></div>
<div class="ln" style="top:778px">30</div>
<div class="dot" style="top:783px"></div>
<div class="cl" style="top:778px"><span class="t"><span style="color:#000080">          </span><span style="color:#8080ff">pPager</span><span style="color:#000080">-&gt;eState = 0;</span></span></div>
<div class="ln" style="top:803px">31</div>
<div class="cl" style="top:803px"><span class="t"><span style="color:#000080">        }</span></span></div>
<div class="ln" style="top:828px">32</div>
<div class="cl" style="top:828px"><span class="t"><span style="color:#000080">      }</span></span></div>
<div class="ln" style="top:853px">33</div>
<div class="cl" style="top:853px"><span class="t"><span style="color:#000080">    }</span></span></div>
<div class="ln" style="top:878px">34</div>
<div class="cl" style="top:878px"><span class="t"><span style="color:#000080">  }</span></span></div>
<div class="ln" style="top:903px">35</div>
<div class="dot" style="top:908px"></div>
<div class="cl" style="top:903px"><span class="t"><span style="color:#000080">  return </span><span style="color:#8080ff">result</span><span style="color:#000080">;</span></span></div>
<div class="ln" style="top:928px">36</div>
<div class="dot" style="top:933px"></div>
<div class="cl" style="top:928px"><span class="t"><span style="color:#000080">}</span></span></div>
<div id="cstat" class="abs">00009F10 sqlite3PagerOpenWal:15 (9F10)</div>
<div class="abs" style="left:832px;top:1549px;width:1px;height:28px;background:#a8a8a8"></div>
<div class="abs" style="left:832px;top:1576px;width:1694px;height:1px;background:#b4b4b4"></div>
<div class="abs" style="left:0;top:1581px;width:2526px;height:1px;background:#b4b4b4"></div>
</body></html>
